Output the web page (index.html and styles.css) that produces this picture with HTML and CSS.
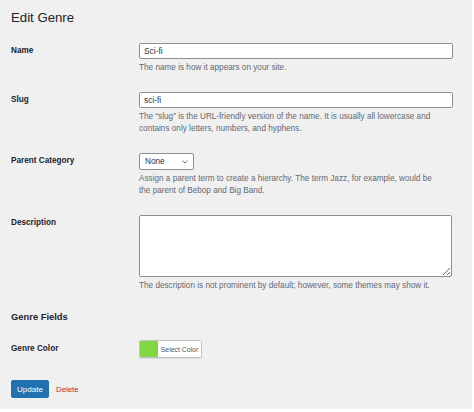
FILE: index.html
```html
<!DOCTYPE html>
<html lang="en">
<head>
<meta charset="utf-8">
<title>Edit Genre</title>
<link rel="stylesheet" href="styles.css">
</head>
<body>
<div class="page">
  <h1 class="title">Edit Genre</h1>
  <form class="form">
    <div class="row">
      <label class="label" for="name">Name</label>
      <div class="field">
        <input id="name" class="input" type="text" value="Sci-fi">
        <p class="help">The name is how it appears on your site.</p>
      </div>
    </div>
    <div class="row">
      <label class="label" for="slug">Slug</label>
      <div class="field">
        <input id="slug" class="input" type="text" value="sci-fi">
        <p class="help">The “slug” is the URL-friendly version of the name. It is usually all lowercase and contains only letters, numbers, and hyphens.</p>
      </div>
    </div>
    <div class="row">
      <label class="label" for="parent">Parent Category</label>
      <div class="field">
        <div class="select" id="parent">
          <span>None</span>
          <svg class="chev" width="6" height="4" viewBox="0 0 6 4"><path d="M0.6 0.7 L3 3 L5.4 0.7" fill="none" stroke="#50575e" stroke-width="0.9"/></svg>
        </div>
        <p class="help">Assign a parent term to create a hierarchy. The term Jazz, for example, would be the parent of Bebop and Big Band.</p>
      </div>
    </div>
    <div class="row">
      <label class="label" for="desc">Description</label>
      <div class="field">
        <textarea id="desc" class="textarea"></textarea>
        <p class="help">The description is not prominent by default; however, some themes may show it.</p>
      </div>
    </div>
    <h2 class="section">Genre Fields</h2>
    <div class="row row-color">
      <span class="label">Genre Color</span>
      <div class="field">
        <button type="button" class="color-btn"><span class="swatch"></span><span class="color-text">Select Color</span></button>
      </div>
    </div>
    <div class="actions">
      <button type="button" class="update">Update</button>
      <a class="delete" href="#">Delete</a>
    </div>
  </form>
</div>
</body>
</html>
```
FILE: styles.css
```css
html, body {
  margin: 0;
  padding: 0;
  background: #ffffff;
}
body {
  font-family: "Liberation Sans", Arial, sans-serif;
  color: #1d2327;
}
.page {
  width: 472px;
  height: 409px;
  box-sizing: border-box;
  background: #f0f0f1;
  padding: 8px 19px 0 11px;
}
.title {
  margin: 0;
  font-size: 13.2px;
  font-weight: 400;
  line-height: 20px;
  color: #1d2327;
}
.form {
  margin-top: 15px;
}
.row {
  display: grid;
  grid-template-columns: 128px 1fr;
  margin-bottom: 18px;
}
.label {
  font-size: 8.2px;
  font-weight: 700;
  line-height: 16px;
  color: #1d2327;
}
.field {
  display: flex;
  flex-direction: column;
  align-items: flex-start;
}
.input {
  box-sizing: border-box;
  width: 314px;
  height: 16px;
  margin: 0;
  padding: 0 4px;
  border: 1px solid #8c8f94;
  border-radius: 2px;
  background: #fff;
  font-family: inherit;
  font-size: 8.4px;
  color: #2c3338;
  outline: none;
}
.help {
  max-width: 306px;
  margin: 3px 0 0;
  font-size: 8.2px;
  line-height: 12px;
  color: #646970;
}
.select {
  box-sizing: border-box;
  width: 55px;
  height: 17px;
  border: 1px solid #8c8f94;
  border-radius: 2px;
  background: #fff;
  display: flex;
  align-items: center;
  justify-content: space-between;
  padding: 0 5px 0 5px;
  font-size: 8.2px;
  color: #2c3338;
}
.textarea {
  box-sizing: border-box;
  width: 313px;
  height: 62px;
  margin: 0;
  border: 1px solid #8c8f94;
  border-radius: 2px;
  background: #fff;
  display: block;
  outline: none;
}
.section {
  margin: 0 0 16px;
  font-size: 9.4px;
  font-weight: 700;
  line-height: 14px;
  color: #1d2327;
}
.row-color {
  margin-bottom: 22px;
}
.row-color .label {
  line-height: 18px;
}
.color-btn {
  display: flex;
  align-items: stretch;
  height: 18px;
  width: 63px;
  box-sizing: border-box;
  padding: 0;
  margin: 0;
  border: 1px solid #c3c4c7;
  border-radius: 2px;
  background: #f6f7f7;
  box-shadow: 0 1px 0 #dcdcde;
  overflow: hidden;
  cursor: pointer;
}
.swatch {
  width: 18px;
  background: #81d742;
}
.color-text {
  flex: 1;
  display: flex;
  align-items: center;
  justify-content: center;
  background: #fff;
  font-family: inherit;
  font-size: 6.9px;
  color: #50575e;
}
.actions {
  display: flex;
  align-items: center;
  gap: 7px;
}
.update {
  box-sizing: border-box;
  width: 38px;
  height: 18px;
  margin: 0;
  padding: 0;
  border: 1px solid #2271b1;
  border-radius: 2px;
  background: #2271b1;
  color: #fff;
  font-family: inherit;
  font-size: 8px;
}
.delete {
  font-size: 7.8px;
  color: #b32d2e;
  text-decoration: none;
}
```
